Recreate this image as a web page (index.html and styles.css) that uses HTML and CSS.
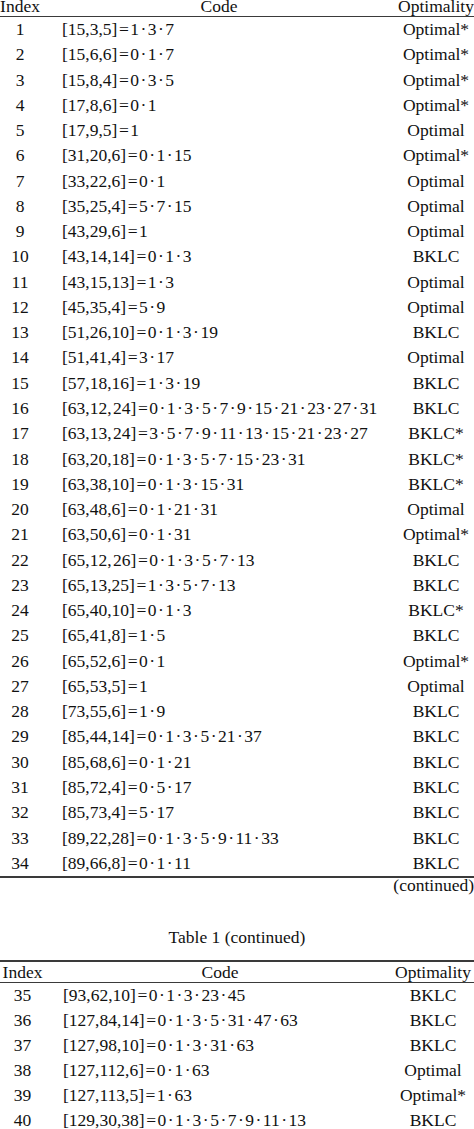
FILE: index.html
```html
<!DOCTYPE html>
<html>
<head>
<meta charset="utf-8">
<link rel="stylesheet" href="styles.css">
</head>
<body>
<div class="page">
  <div class="tbl t1">
    <div class="row head"><span class="idx">Index</span><span class="code hc">Code</span><span class="opt">Optimality</span></div>
    <div class="body">
      <div class="row"><span class="idx">1</span><span class="code">[15,3,5] = 1 · 3 · 7</span><span class="opt">Optimal*</span></div>
      <div class="row"><span class="idx">2</span><span class="code">[15,6,6] = 0 · 1 · 7</span><span class="opt">Optimal*</span></div>
      <div class="row"><span class="idx">3</span><span class="code">[15,8,4] = 0 · 3 · 5</span><span class="opt">Optimal*</span></div>
      <div class="row"><span class="idx">4</span><span class="code">[17,8,6] = 0 · 1</span><span class="opt">Optimal*</span></div>
      <div class="row"><span class="idx">5</span><span class="code">[17,9,5] = 1</span><span class="opt">Optimal</span></div>
      <div class="row"><span class="idx">6</span><span class="code">[31,20,6] = 0 · 1 · 15</span><span class="opt">Optimal*</span></div>
      <div class="row"><span class="idx">7</span><span class="code">[33,22,6] = 0 · 1</span><span class="opt">Optimal</span></div>
      <div class="row"><span class="idx">8</span><span class="code">[35,25,4] = 5 · 7 · 15</span><span class="opt">Optimal</span></div>
      <div class="row"><span class="idx">9</span><span class="code">[43,29,6] = 1</span><span class="opt">Optimal</span></div>
      <div class="row"><span class="idx">10</span><span class="code">[43,14,14] = 0 · 1 · 3</span><span class="opt">BKLC</span></div>
      <div class="row"><span class="idx">11</span><span class="code">[43,15,13] = 1 · 3</span><span class="opt">Optimal</span></div>
      <div class="row"><span class="idx">12</span><span class="code">[45,35,4] = 5 · 9</span><span class="opt">Optimal</span></div>
      <div class="row"><span class="idx">13</span><span class="code">[51,26,10] = 0 · 1 · 3 · 19</span><span class="opt">BKLC</span></div>
      <div class="row"><span class="idx">14</span><span class="code">[51,41,4] = 3 · 17</span><span class="opt">Optimal</span></div>
      <div class="row"><span class="idx">15</span><span class="code">[57,18,16] = 1 · 3 · 19</span><span class="opt">BKLC</span></div>
      <div class="row"><span class="idx">16</span><span class="code">[63,12, 24] = 0 · 1 · 3 · 5 · 7 · 9 · 15 · 21 · 23 · 27 · 31</span><span class="opt">BKLC</span></div>
      <div class="row"><span class="idx">17</span><span class="code">[63,13, 24] = 3 · 5 · 7 · 9 · 11 · 13 · 15 · 21 · 23 · 27</span><span class="opt">BKLC*</span></div>
      <div class="row"><span class="idx">18</span><span class="code">[63,20,18] = 0 · 1 · 3 · 5 · 7 · 15 · 23 · 31</span><span class="opt">BKLC*</span></div>
      <div class="row"><span class="idx">19</span><span class="code">[63,38,10] = 0 · 1 · 3 · 15 · 31</span><span class="opt">BKLC*</span></div>
      <div class="row"><span class="idx">20</span><span class="code">[63,48,6] = 0 · 1 · 21 · 31</span><span class="opt">Optimal</span></div>
      <div class="row"><span class="idx">21</span><span class="code">[63,50,6] = 0 · 1 · 31</span><span class="opt">Optimal*</span></div>
      <div class="row"><span class="idx">22</span><span class="code">[65,12, 26] = 0 · 1 · 3 · 5 · 7 · 13</span><span class="opt">BKLC</span></div>
      <div class="row"><span class="idx">23</span><span class="code">[65,13,25] = 1 · 3 · 5 · 7 · 13</span><span class="opt">BKLC</span></div>
      <div class="row"><span class="idx">24</span><span class="code">[65,40,10] = 0 · 1 · 3</span><span class="opt">BKLC*</span></div>
      <div class="row"><span class="idx">25</span><span class="code">[65,41,8] = 1 · 5</span><span class="opt">BKLC</span></div>
      <div class="row"><span class="idx">26</span><span class="code">[65,52,6] = 0 · 1</span><span class="opt">Optimal*</span></div>
      <div class="row"><span class="idx">27</span><span class="code">[65,53,5] = 1</span><span class="opt">Optimal</span></div>
      <div class="row"><span class="idx">28</span><span class="code">[73,55,6] = 1 · 9</span><span class="opt">BKLC</span></div>
      <div class="row"><span class="idx">29</span><span class="code">[85,44,14] = 0 · 1 · 3 · 5 · 21 · 37</span><span class="opt">BKLC</span></div>
      <div class="row"><span class="idx">30</span><span class="code">[85,68,6] = 0 · 1 · 21</span><span class="opt">BKLC</span></div>
      <div class="row"><span class="idx">31</span><span class="code">[85,72,4] = 0 · 5 · 17</span><span class="opt">BKLC</span></div>
      <div class="row"><span class="idx">32</span><span class="code">[85,73,4] = 5 · 17</span><span class="opt">BKLC</span></div>
      <div class="row"><span class="idx">33</span><span class="code">[89,22,28] = 0 · 1 · 3 · 5 · 9 · 11 · 33</span><span class="opt">BKLC</span></div>
      <div class="row"><span class="idx">34</span><span class="code">[89,66,8] = 0 · 1 · 11</span><span class="opt">BKLC</span></div>
    </div>
  </div>
  <div class="cont">(continued)</div>
  <div class="caption">Table 1 (continued)</div>
  <div class="tbl t2">
    <div class="row head"><span class="idx">Index</span><span class="code hc">Code</span><span class="opt">Optimality</span></div>
    <div class="body">
      <div class="row"><span class="idx">35</span><span class="code">[93,62,10] = 0 · 1 · 3 · 23 · 45</span><span class="opt">BKLC</span></div>
      <div class="row"><span class="idx">36</span><span class="code">[127,84,14] = 0 · 1 · 3 · 5 · 31 · 47 · 63</span><span class="opt">BKLC</span></div>
      <div class="row"><span class="idx">37</span><span class="code">[127,98,10] = 0 · 1 · 3 · 31 · 63</span><span class="opt">BKLC</span></div>
      <div class="row"><span class="idx">38</span><span class="code">[127,112,6] = 0 · 1 · 63</span><span class="opt">Optimal</span></div>
      <div class="row"><span class="idx">39</span><span class="code">[127,113,5] = 1 · 63</span><span class="opt">Optimal*</span></div>
      <div class="row"><span class="idx">40</span><span class="code">[129,30,38] = 0 · 1 · 3 · 5 · 7 · 9 · 11 · 13</span><span class="opt">BKLC</span></div>
    </div>
  </div>
</div>
</body>
</html>
```

FILE: styles.css
```css
html, body {
  margin: 0;
  padding: 0;
  background: #ffffff;
}

body {
  font-family: "Liberation Serif", "Times New Roman", serif;
  font-size: 17.5px;
  color: #111111;
  width: 474px;
  height: 1129px;
  overflow: hidden;
}

.page {
  display: flex;
  flex-direction: column;
}

.tbl {
  display: flex;
  flex-direction: column;
}

.row {
  display: grid;
  grid-template-columns: 40px minmax(0, 1fr) 76px;
  column-gap: 22px;
  line-height: 25.27px;
  white-space: nowrap;
}

.t2 .row {
  grid-template-columns: 45px minmax(0, 1fr) 76px;
  column-gap: 18px;
  padding-right: 3px;
  line-height: 24.9px;
}

.row.head {
  line-height: 20px;
  border-bottom: 1.5px solid #3a3a3a;
}

.t1 .row.head {
  margin-top: -3px;
  line-height: 19px;
}

.t1 .body {
  border-bottom: 2px solid #3a3a3a;
}

.t2 {
  border-top: 2px solid #3a3a3a;
  margin-top: 13px;
}

.t2 .row.head {
  line-height: 20px;
}

.idx {
  text-align: center;
}

.code {
  text-align: left;
  word-spacing: -0.165em;
}

.code.hc {
  text-align: center;
  word-spacing: normal;
}

.opt {
  text-align: center;
}

.cont {
  text-align: right;
  line-height: 18px;
  margin-top: -2px;
}

.caption {
  text-align: center;
  line-height: 20px;
  margin-top: 33px;
}
```
